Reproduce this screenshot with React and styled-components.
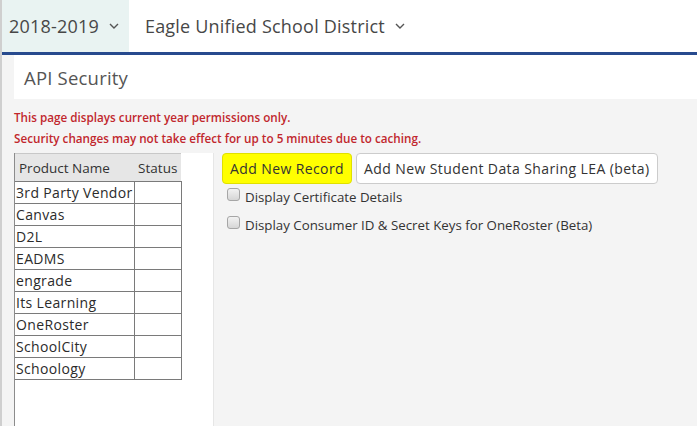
import React from 'react';
import styled, { createGlobalStyle } from 'styled-components';

const GlobalStyle = createGlobalStyle`
  html, body {
    margin: 0;
    padding: 0;
    background: #f4f4f4;
    font-family: 'Open Sans', 'Liberation Sans', sans-serif;
  }
`;

const Page = styled.div`
  min-height: 426px;
  border-left: 2px solid #cfcfcf;
  background: #f4f4f4;
  display: flex;
  flex-direction: column;
  overflow: hidden;
`;

const TopBar = styled.div`
  display: flex;
  align-items: stretch;
  height: 52px;
  background: #fff;
  border-bottom: 3px solid #274a8e;
`;

const Selector = styled.div`
  display: flex;
  align-items: center;
  padding: 0 10px 0 ${props => props.first ? '7px' : '16px'};
  background: ${props => props.first ? '#e9f3f2' : '#fff'};
  color: #474747;
  font-size: 18px;
  letter-spacing: 0.2px;
  gap: 10px;
`;

const Chevron = () => (
  <svg width="10" height="6" viewBox="0 0 10 6">
    <path d="M1 1 L5 5 L9 1" fill="none" stroke="#555" strokeWidth="1.4" />
  </svg>
);

const TitleBar = styled.div`
  margin-left: 12px;
  height: 44px;
  background: #fff;
  display: flex;
  align-items: center;
  padding-left: 10px;
  color: #555;
  font-size: 18.5px;
  letter-spacing: 0.2px;
`;

const Body = styled.div`
  flex: 1;
  display: flex;
  flex-direction: column;
  padding: 8px 0 0 12px;
`;

const Note = styled.div`
  color: #c1272d;
  font-size: 11.7px;
  font-weight: 600;
  line-height: 21px;
`;

const Content = styled.div`
  flex: 1;
  display: flex;
  margin-top: 4px;
`;

const LeftPanel = styled.div`
  width: 198px;
  background: #fff;
  border-left: 1px solid #8c8c8c;
  border-right: 1px solid #e6e6e6;
  min-height: 274px;
`;

const Table = styled.table`
  border-collapse: collapse;
  color: #2b2b2b;
`;

const HeadCell = styled.th`
  background: #e6e6e6;
  font-weight: 400;
  font-size: 13.5px;
  text-align: left;
  height: 27px;
  padding: 0 4px;
  border-top: 1px solid #c8c8c8;
  color: #333;
`;

const Cell = styled.td`
  border: 1px solid #7a7a7a;
  border-left: ${props => props.first ? 'none' : '1px solid #7a7a7a'};
  height: 21px;
  padding: 0 1px;
  width: ${props => props.first ? '114px' : '44px'};
  white-space: nowrap;
  font-size: 14px;
  letter-spacing: 0.35px;
`;

const RightPanel = styled.div`
  padding-left: 8px;
  display: flex;
  flex-direction: column;
`;

const ButtonRow = styled.div`
  display: flex;
  gap: 4px;
`;

const Button = styled.button`
  height: 31px;
  padding: 0 7px;
  border-radius: 4px;
  border: 1px solid ${props => props.highlight ? '#e0e000' : '#cccccc'};
  background: ${props => props.highlight ? '#ffff00' : '#fff'};
  color: #333;
  font-family: inherit;
  font-size: 14px;
  letter-spacing: 0.4px;
`;

const CheckRow = styled.label`
  display: flex;
  align-items: center;
  gap: 5px;
  height: 28px;
  padding-left: 5px;
  font-size: 13.3px;
  color: #333;
  margin-top: ${props => props.first ? '-1px' : '0'};
`;

const Box = styled.span`
  width: 13px;
  height: 13px;
  border: 1px solid #a6a6a6;
  border-radius: 3px;
  background: linear-gradient(#f2f2f2, #d6d6d6);
  box-sizing: border-box;
  margin-top: -6px;
`;

const products = [
  '3rd Party Vendor', 'Canvas', 'D2L', 'EADMS', 'engrade',
  'Its Learning', 'OneRoster', 'SchoolCity', 'Schoology',
];

export default function App() {
  return (
    <>
      <GlobalStyle />
      <Page>
        <TopBar>
          <Selector first>2018-2019 <Chevron /></Selector>
          <Selector>Eagle Unified School District <Chevron /></Selector>
        </TopBar>
        <TitleBar>API Security</TitleBar>
        <Body>
          <Note>This page displays current year permissions only.</Note>
          <Note>Security changes may not take effect for up to 5 minutes due to caching.</Note>
          <Content>
            <LeftPanel>
              <Table>
                <thead>
                  <tr>
                    <HeadCell>Product Name</HeadCell>
                    <HeadCell>Status</HeadCell>
                  </tr>
                </thead>
                <tbody>
                  {products.map(p => (
                    <tr key={p}>
                      <Cell first>{p}</Cell>
                      <Cell />
                    </tr>
                  ))}
                </tbody>
              </Table>
            </LeftPanel>
            <RightPanel>
              <ButtonRow>
                <Button highlight>Add New Record</Button>
                <Button>Add New Student Data Sharing LEA (beta)</Button>
              </ButtonRow>
              <CheckRow first><Box />Display Certificate Details</CheckRow>
              <CheckRow><Box />Display Consumer ID &amp; Secret Keys for OneRoster (Beta)</CheckRow>
            </RightPanel>
          </Content>
        </Body>
      </Page>
    </>
  );
}
